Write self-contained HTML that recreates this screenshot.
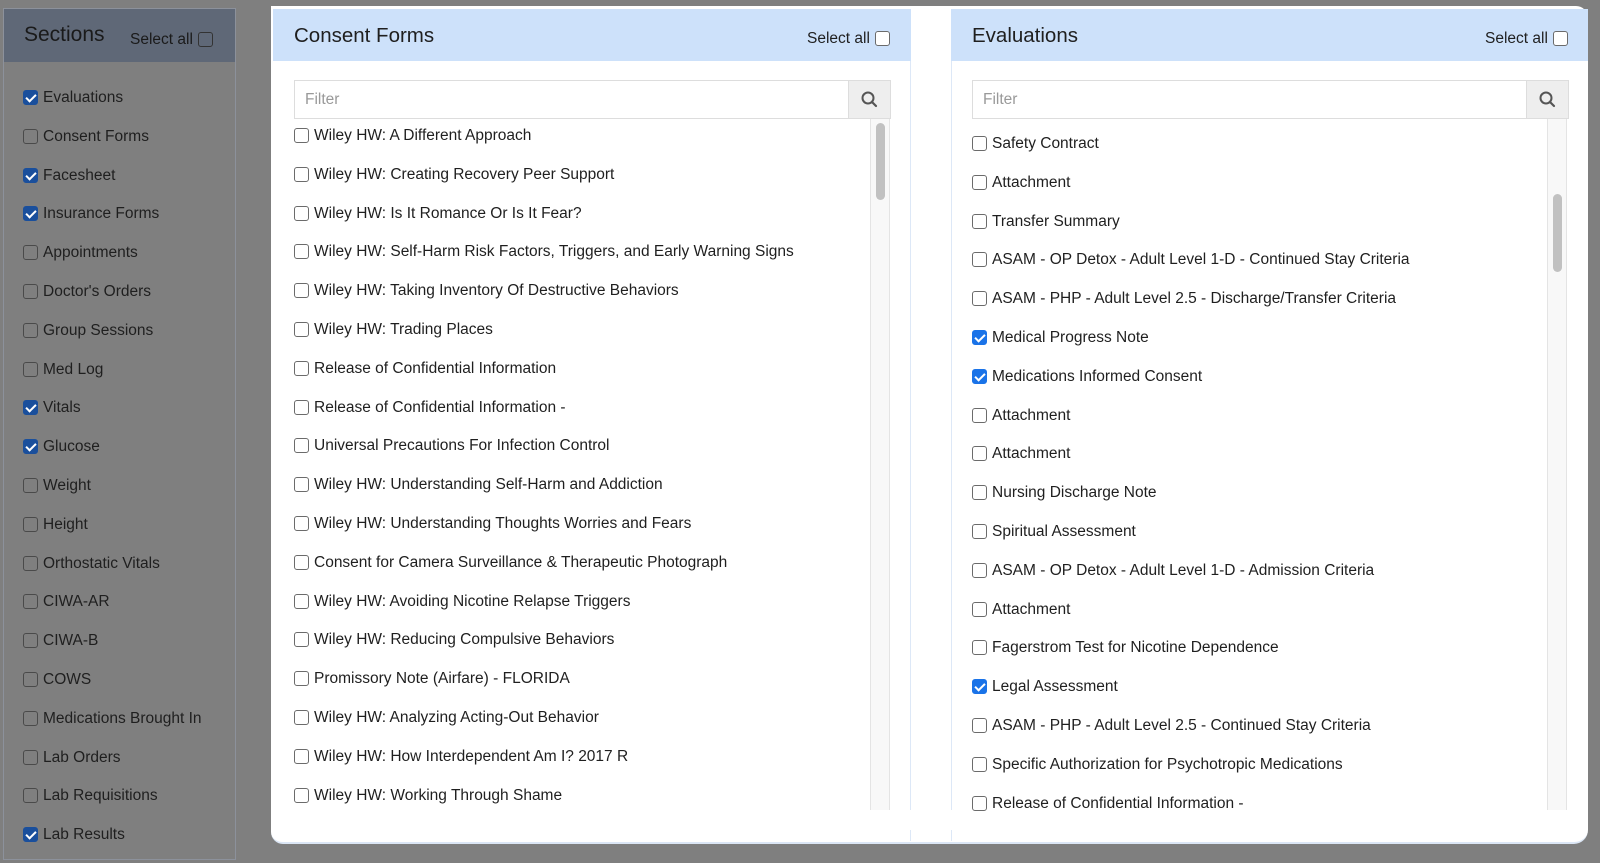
<!DOCTYPE html>
<html><head><meta charset="utf-8"><style>
*{box-sizing:border-box;margin:0;padding:0}
body{width:1600px;height:863px;background:#7f7f7f;font-family:"Liberation Sans",Arial,sans-serif;position:relative;overflow:hidden;color:#1f1f1f}
.abs{position:absolute}
.cb{position:absolute;width:15px;height:15px;border:1.5px solid #6b6b6b;border-radius:3px;background:#fff}
.cb.on{background:#1a73e8;border-color:#1a73e8}
.cb.on:after{content:"";position:absolute;left:4px;top:1px;width:4px;height:8px;border:solid #fff;border-width:0 2px 2px 0;transform:rotate(45deg)}
.sb .cb{border-color:#4a4a4a;background:#7f7f7f}
.sb .cb.on{background:#1a4f9c;border-color:#1a4f9c}
.item{position:absolute;font-size:15.5px;line-height:18px;white-space:nowrap}
.item .cb{left:0;top:1px}
.item span{position:absolute;left:20px;top:0}
.hdr{position:absolute;background:#cde1fa;height:52px}
.title{position:absolute;font-size:20.5px;top:24px}
.sel{position:absolute;font-size:15.5px;top:30px;white-space:nowrap}
.filter{position:absolute;height:39px;border:1px solid #ddd;background:#fff}
.filter span{position:absolute;left:10px;top:10px;color:#999;font-size:15.5px}
.btn{position:absolute;right:0;top:0;width:42px;height:37px;background:#eeeeee;border-left:1px solid #ddd}
.track{position:absolute;width:20px;background:#f8f8f8;border-left:1px solid #e4e4e4;border-right:1px solid #e4e4e4}
.thumb{position:absolute;left:5px;width:9px;border-radius:5px;background:#c1c1c1}
</style></head><body>
<div class="abs sb" style="left:3px;top:8px;width:233px;height:852px;border:1px solid #8c919b;background:#7f7f7f">
  <div class="abs" style="left:0;top:0;width:231px;height:53px;background:#5f6877"></div>
  <div class="abs" style="left:20px;top:14px;font-size:21px;color:#1a1a1a">Sections</div>
  <div class="abs" style="left:126px;top:22px;font-size:15.5px;color:#1a1a1a">Select all</div>
  <div class="cb" style="left:194px;top:23px;background:#5f6877;border-color:#333"></div>
</div>
<div id="sbitems"></div>
<div class="abs" style="left:271px;top:6px;width:1317px;height:838px;background:#fff;border-radius:0 12px 14px 12px;border-bottom:2px solid #dbe6f5"></div>
<div class="abs" style="left:273px;top:9px;width:638px;height:832px;border-right:1px solid #dde8f7"></div>
<div class="abs" style="left:951px;top:9px;width:637px;height:832px;border-left:1px solid #dde8f7"></div>
<div class="hdr" style="left:273px;top:9px;width:638px"></div>
<div class="title" style="left:294px">Consent Forms</div>
<div class="sel" style="left:807px">Select all</div>
<div class="cb" style="left:875px;top:31px"></div>
<div class="hdr" style="left:951px;top:9px;width:637px"></div>
<div class="title" style="left:972px">Evaluations</div>
<div class="sel" style="left:1485px">Select all</div>
<div class="cb" style="left:1553px;top:31px"></div>

<div class="filter" style="left:294px;top:80px;width:597px"><span>Filter</span><div class="btn"><svg width="42" height="37" viewBox="0 0 42 37"><circle cx="19" cy="17" r="5.5" fill="none" stroke="#555" stroke-width="2"/><line x1="23" y1="21" x2="27" y2="25" stroke="#555" stroke-width="2.2" stroke-linecap="round"/></svg></div></div>
<div class="track" style="left:870px;top:119px;height:691px"><div class="thumb" style="top:4px;height:77px"></div></div>
<div class="filter" style="left:972px;top:80px;width:597px"><span>Filter</span><div class="btn"><svg width="42" height="37" viewBox="0 0 42 37"><circle cx="19" cy="17" r="5.5" fill="none" stroke="#555" stroke-width="2"/><line x1="23" y1="21" x2="27" y2="25" stroke="#555" stroke-width="2.2" stroke-linecap="round"/></svg></div></div>
<div class="track" style="left:1547px;top:119px;height:691px"><div class="thumb" style="top:75px;height:78px"></div></div>
<div class="abs" style="left:273px;top:810px;width:1315px;height:20px;background:#fff"></div>
<div id="c1"></div><div id="c2"></div>
<script>
function build(id,x,y0,list,cls){var h='';list.forEach(function(t,i){var on=t[0]=='*';var s=on?t.slice(1):t;h+='<div class="item '+(cls||'')+'" style="left:'+x+'px;top:'+(y0+i*38.8-9)+'px"><div class="cb'+(on?' on':'')+'"></div><span>'+s+'</span></div>';});document.getElementById(id).innerHTML=h;}
build('sbitems',23,98,['*Evaluations','Consent Forms','*Facesheet','*Insurance Forms','Appointments',"Doctor's Orders",'Group Sessions','Med Log','*Vitals','*Glucose','Weight','Height','Orthostatic Vitals','CIWA-AR','CIWA-B','COWS','Medications Brought In','Lab Orders','Lab Requisitions','*Lab Results']);
document.getElementById('sbitems').className='sb';
build('c1',294,136,['Wiley HW: A Different Approach','Wiley HW: Creating Recovery Peer Support','Wiley HW: Is It Romance Or Is It Fear?','Wiley HW: Self-Harm Risk Factors, Triggers, and Early Warning Signs','Wiley HW: Taking Inventory Of Destructive Behaviors','Wiley HW: Trading Places','Release of Confidential Information','Release of Confidential Information -','Universal Precautions For Infection Control','Wiley HW: Understanding Self-Harm and Addiction','Wiley HW: Understanding Thoughts Worries and Fears','Consent for Camera Surveillance &amp; Therapeutic Photograph','Wiley HW: Avoiding Nicotine Relapse Triggers','Wiley HW: Reducing Compulsive Behaviors','Promissory Note (Airfare) - FLORIDA','Wiley HW: Analyzing Acting-Out Behavior','Wiley HW: How Interdependent Am I? 2017 R','Wiley HW: Working Through Shame']);
build('c2',972,144,['Safety Contract','Attachment','Transfer Summary','ASAM - OP Detox - Adult Level 1-D - Continued Stay Criteria','ASAM - PHP - Adult Level 2.5 - Discharge/Transfer Criteria','*Medical Progress Note','*Medications Informed Consent','Attachment','Attachment','Nursing Discharge Note','Spiritual Assessment','ASAM - OP Detox - Adult Level 1-D - Admission Criteria','Attachment','Fagerstrom Test for Nicotine Dependence','*Legal Assessment','ASAM - PHP - Adult Level 2.5 - Continued Stay Criteria','Specific Authorization for Psychotropic Medications','Release of Confidential Information -']);
</script>
</body></html>
